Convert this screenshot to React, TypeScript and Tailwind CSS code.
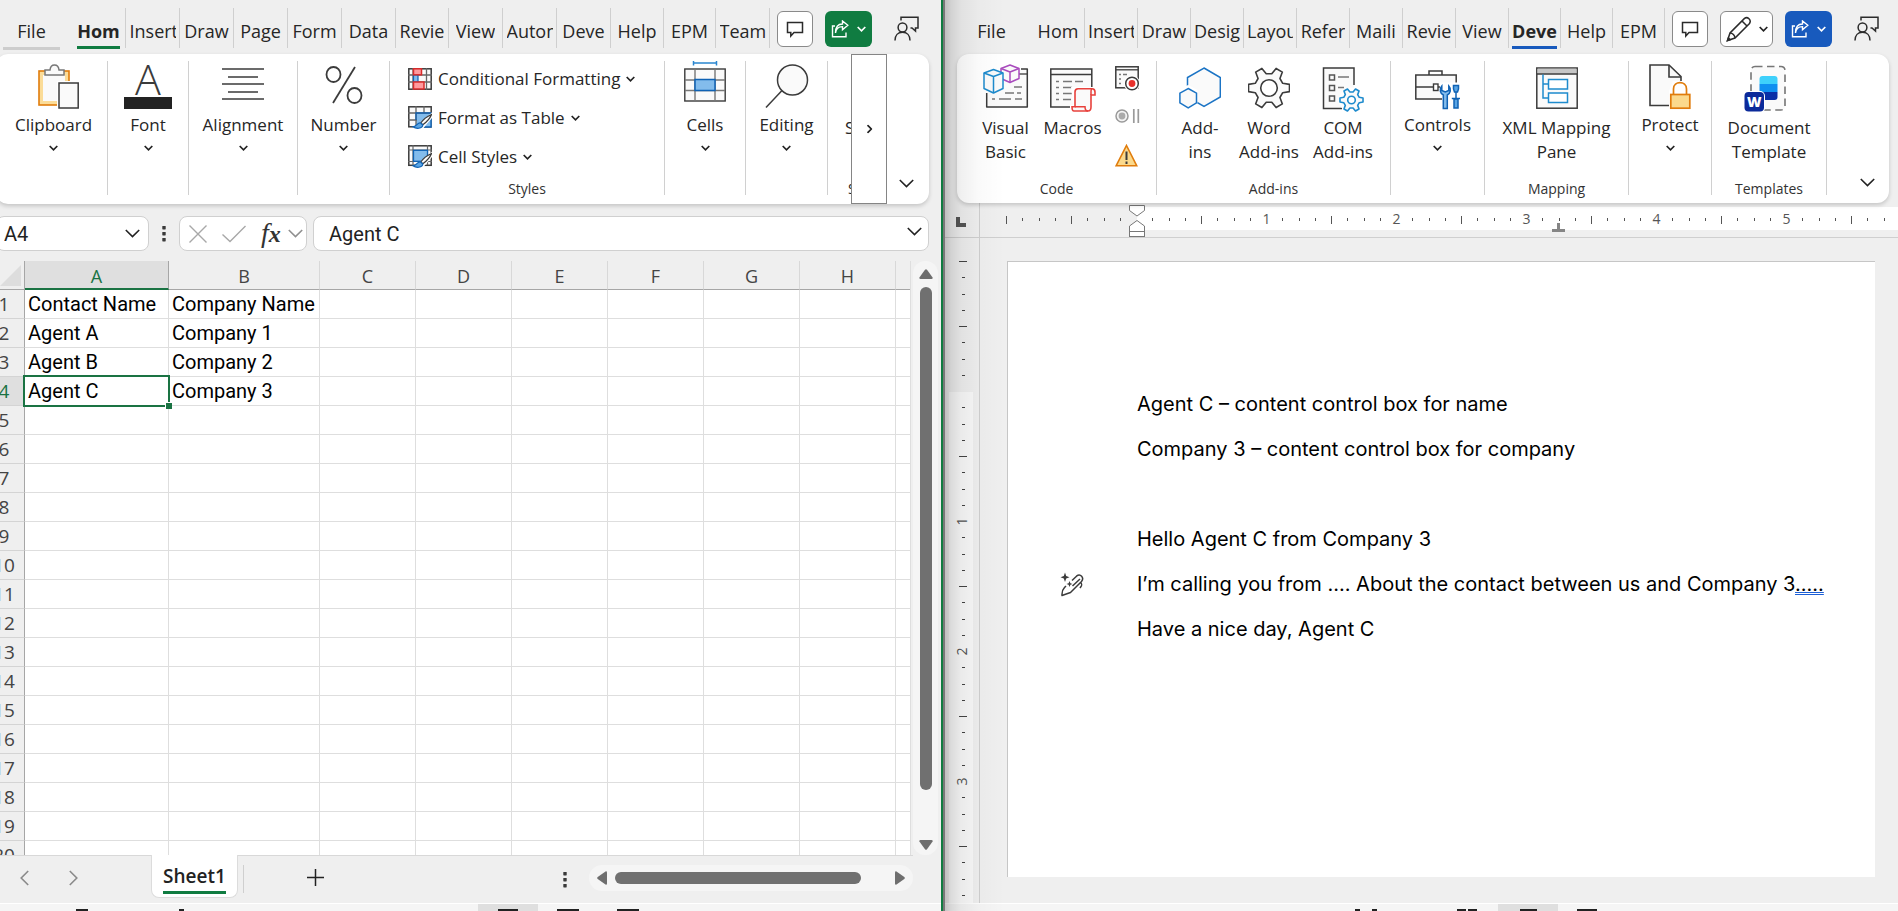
import React from "react";

const INK = "#3b3b3b";

/* ---------- small glyph icons ---------- */

function ChevronSmall({ className = "text-[#222]" }: { className?: string }) {
  return (
    <svg width="9" height="6" viewBox="0 0 9 6" className={className} fill="none" stroke="currentColor" strokeWidth="1.7" aria-hidden="true">
      <path d="M0.7 1 L4.5 4.8 L8.3 1" />
    </svg>
  );
}

function ChevronWide({ className = "text-[#222]" }: { className?: string }) {
  return (
    <svg width="15" height="9" viewBox="0 0 15 9" className={className} fill="none" stroke="currentColor" strokeWidth="1.6" aria-hidden="true">
      <path d="M0.8 1 L7.5 7.6 L14.2 1" />
    </svg>
  );
}

function Dots() {
  return (
    <svg width="4" height="16" viewBox="0 0 4 16" fill="#3a3a3a" aria-hidden="true">
      <rect width="3.4" height="3.4" x="0.3" y="0" rx="0.6" />
      <rect width="3.4" height="3.4" x="0.3" y="6" rx="0.6" />
      <rect width="3.4" height="3.4" x="0.3" y="12" rx="0.6" />
    </svg>
  );
}

function CommentIcon() {
  return (
    <svg width="18" height="18" viewBox="0 0 18 18" fill="none" stroke="#2b2b2b" strokeWidth="1.5" aria-hidden="true">
      <path d="M1.5 2.5 H16.5 V12.5 H8 L4.8 16 V12.5 H1.5 Z" />
    </svg>
  );
}

function ShareIcon() {
  return (
    <svg width="18" height="18" viewBox="0 0 18 18" fill="none" stroke="#fff" strokeWidth="1.4" aria-hidden="true">
      <path d="M4 6 H1.5 V16.8 H15 V12.5" />
      <path d="M4.5 13 C5 8.5 7.5 6.6 11.5 6.6 V9.8 L16.8 5.2 L11.5 1 V4 C6.5 4 4.5 7.5 4.5 13 Z" />
    </svg>
  );
}

function PenIcon() {
  return (
    <svg width="26" height="26" viewBox="0 0 26 26" fill="none" stroke="#2b2b2b" strokeWidth="1.5" aria-hidden="true">
      <path d="M1.5 24.5 L4 17 L18.5 2.4 C21.5 0.2 25.8 4 23.5 7.5 L9 22 Z" />
      <path d="M16 5 L21 10 M4 17 C6.5 17 9 19.5 9 22" />
      <path d="M1.5 24.5 L2.4 21.8 L4.2 23.6 Z" fill="#2b2b2b" />
    </svg>
  );
}

function PersonFeedbackIcon() {
  return (
    <svg width="25" height="25" viewBox="0 0 25 25" fill="none" stroke="#2b2b2b" strokeWidth="1.5" aria-hidden="true">
      <path d="M7 4.5 V1.2 H24 V12 H21.5 V15 L18 12 H16.5" />
      <circle cx="8.5" cy="11.5" r="4.4" />
      <path d="M1 24.5 C1 19.5 4 16.3 8.5 16.3 S16 19.5 16 24.5" />
    </svg>
  );
}

/* ---------- spreadsheet ribbon icons ---------- */

function ClipboardIcon() {
  return (
    <svg width="50" height="46" viewBox="0 0 50 46" aria-hidden="true">
      <rect x="10" y="7" width="30" height="34" fill="#fbdc98" stroke="#e07c0c" strokeWidth="1.6" />
      <rect x="14" y="11" width="22" height="26" fill="#fafafa" />
      <path d="M16 11 V6 H21 C21.3 2.6 23 1 25.5 1 S29.7 2.6 30 6 H35 V11 Z" fill="#fafafa" stroke="#777" strokeWidth="1.5" />
      <rect x="28" y="17" width="22" height="29" fill="#fff" />
      <rect x="30" y="19" width="19.2" height="25" fill="#fafafa" stroke={INK} strokeWidth="1.5" />
    </svg>
  );
}

function FontIcon() {
  return (
    <svg width="48" height="46" viewBox="0 0 48 46" aria-hidden="true">
      <text x="24" y="31" textAnchor="middle" fontSize="43" fill={INK} className="font-['Open_Sans',sans-serif] font-light">
        A
      </text>
      <rect x="0" y="33" width="48" height="12" fill="#222" />
    </svg>
  );
}

function AlignmentIcon() {
  return (
    <svg width="42" height="46" viewBox="0 0 42 46" stroke={INK} strokeWidth="1.4" aria-hidden="true">
      <path d="M0 5 H42 M6 13 H36 M0 20 H42 M6 28 H36 M0 35 H42" />
    </svg>
  );
}

function PercentIcon() {
  return (
    <svg width="38" height="46" viewBox="0 0 38 46" fill="none" stroke={INK} strokeWidth="1.8" aria-hidden="true">
      <ellipse cx="8.5" cy="10.5" rx="7" ry="7.5" />
      <ellipse cx="29.5" cy="31.5" rx="7" ry="7.5" />
      <path d="M30 3 L8 39" />
    </svg>
  );
}

function CellsIcon() {
  return (
    <svg width="42" height="46" viewBox="0 0 42 46" overflow="visible" fill="none" aria-hidden="true">
      <path d="M9.5 -1 H32.5 M9.5 -3 V1.5 M32.5 -3 V1.5" stroke="#2a86d0" strokeWidth="1.5" />
      <rect x="0.8" y="5" width="40.4" height="32" fill="#fafafa" stroke={INK} strokeWidth="1.4" />
      <path d="M1 16 H41 M1 26.5 H41 M11 5 V37 M31 5 V37" stroke="#777" strokeWidth="1.4" />
      <rect x="11" y="15.5" width="20" height="11" fill="#83bcec" stroke="#0f62b4" strokeWidth="1.5" />
    </svg>
  );
}

function MagnifierIcon() {
  return (
    <svg width="44" height="46" viewBox="0 0 44 46" fill="none" stroke={INK} strokeWidth="1.5" aria-hidden="true">
      <circle cx="27.5" cy="16" r="15" fill="#fafafa" />
      <path d="M17 26.5 L1 43.5" />
    </svg>
  );
}

function ConditionalIcon() {
  return (
    <svg width="24" height="22" viewBox="0 0 24 22" fill="none" aria-hidden="true">
      <rect x="0.8" y="0.8" width="22.4" height="20.4" fill="#fafafa" stroke={INK} strokeWidth="1.5" />
      <path d="M0 7 H24 M0 14 H24 M5 0 V22 M18.5 0 V22" stroke="#666" strokeWidth="1.3" />
      <rect x="5.5" y="7" width="4.5" height="7" fill="#83bcec" stroke="#0f62b4" strokeWidth="1.2" />
      <rect x="5.5" y="0.8" width="8" height="6" fill="#ff9a9e" stroke="#d92b2b" strokeWidth="1.5" />
      <rect x="5.5" y="14" width="10.5" height="7" fill="#ff9a9e" stroke="#d92b2b" strokeWidth="1.5" />
    </svg>
  );
}

function BrushOverlay() {
  return (
    <g>
      <path d="M24 6.5 L11 18 L4 22.5 H15 L24 12 Z" fill="#fff" />
      <path d="M23.5 8.5 C19 10.5 14.5 14.5 12.8 17 L14.8 18.8 C18 16.5 22 12.5 23.5 8.5 Z" fill="#fafafa" stroke={INK} strokeWidth="1.3" />
      <path d="M12.3 16.8 C9 16.5 9.5 20.5 5 20.8 C8 23 14.5 23 14.8 19 Z" fill="#5aa5e4" stroke="#0f62b4" strokeWidth="1.2" />
    </g>
  );
}

function FormatTableIcon() {
  return (
    <svg width="24" height="23" viewBox="0 0 24 23" fill="none" aria-hidden="true">
      <rect x="0.8" y="0.8" width="22.4" height="20" fill="#fafafa" stroke={INK} strokeWidth="1.5" />
      <rect x="8" y="7" width="15.5" height="14" fill="#83bcec" />
      <path d="M0 7 H24 M0 14 H9 M8 0 V20 M16 0 V7" stroke="#666" strokeWidth="1.3" />
      <path d="M8 14 V7 H23 V21 H16" stroke="#0f62b4" strokeWidth="1.3" />
      <BrushOverlay />
    </svg>
  );
}

function CellStylesIcon() {
  return (
    <svg width="24" height="23" viewBox="0 0 24 23" fill="none" aria-hidden="true">
      <rect x="0.8" y="0.8" width="22.4" height="19.5" fill="#fafafa" stroke={INK} strokeWidth="1.5" />
      <path d="M0 5 H24 M0 16.5 H24 M5 0 V20 M19.5 0 V20" stroke="#666" strokeWidth="1.2" />
      <rect x="5.5" y="5.3" width="14" height="11" fill="#83bcec" stroke="#0f62b4" strokeWidth="1.3" />
      <BrushOverlay />
    </svg>
  );
}

/* ---------- document ribbon icons ---------- */

function gearPath(cx: number, cy: number, outer: number, inner: number) {
  const pts: string[] = [];
  for (let k = 0; k < 6; k++) {
    const mid = k * 60;
    for (const [off, r] of [
      [-19, inner],
      [-10, outer],
      [10, outer],
      [19, inner],
    ]) {
      const a = ((mid + off) * Math.PI) / 180;
      pts.push(`${(cx + r * Math.cos(a)).toFixed(2)} ${(cy + r * Math.sin(a)).toFixed(2)}`);
    }
  }
  return `M${pts.join(" L")} Z`;
}

function VisualBasicIcon() {
  return (
    <svg width="46" height="46" viewBox="0 0 46 46" fill="none" strokeLinejoin="round" aria-hidden="true">
      <path d="M38 5 H44.3 V43 H3.7 V29" stroke={INK} strokeWidth="1.5" fill="#fafafa" />
      <path d="M36 10 H44" stroke={INK} strokeWidth="1.3" />
      <path d="M31 23 H39 M22 29 H31 M34 29 H38 M9 35 H12 M16 35 H28 M32 35 H39" stroke="#777" strokeWidth="1.5" />
      <path d="M27 1 L36 4.5 V14.5 L27 18.5 L18 14.5 V4.5 Z" fill="#fafafa" stroke="#a94bbd" strokeWidth="1.5" />
      <path d="M18 4.5 L27 8 L36 4.5 M27 8 V18" stroke="#a94bbd" strokeWidth="1.5" />
      <path d="M10.5 5.500 L20 9 V24.5 L10.5 29 L1 24.5 V9 Z" fill="#fafafa" stroke="#1e8bcd" strokeWidth="1.5" />
      <path d="M1 9 L10.5 12.5 L20 9 M10.5 12.5 V29" stroke="#1e8bcd" strokeWidth="1.5" />
    </svg>
  );
}

function MacrosIcon() {
  return (
    <svg width="46" height="48" viewBox="0 0 46 48" fill="none" aria-hidden="true">
      <rect x="0.8" y="5" width="41" height="38" fill="#fafafa" stroke={INK} strokeWidth="1.5" />
      <path d="M1 10.5 H42" stroke={INK} strokeWidth="1.3" />
      <path d="M6 17.5 H9 M13 17.5 H22 M25 17.5 H33 M6 23.5 H9 M13 23.5 H22 M6 29.5 H9 M13 29.5 H22 M6 35.5 H9 M13 35.5 H21" stroke="#777" strokeWidth="1.4" />
      <path d="M21 23 H46 V33 H43 V48 H20 V41 H23 Z" fill="#fff" />
      <path d="M28 24.7 H42 C44 24.7 45 26 45 28 V31 H41 V43 C41 45.5 40 47 38 47 H24 C22.5 47 22 45.5 22 42.7 H25 V28 C25 26 26 24.7 28 24.7 Z" fill="#fafafa" stroke="#e8413c" strokeWidth="1.6" />
      <path d="M25 42.7 H35 C35 45.5 36 47 38 47 M41 31 V28 C41 26 41.5 24.7 42 24.7" stroke="#e8413c" strokeWidth="1.5" />
    </svg>
  );
}

function RecordMacroIcon() {
  return (
    <svg width="25" height="25" viewBox="0 0 25 25" fill="none" aria-hidden="true">
      <rect x="0.8" y="0.8" width="22.4" height="21" fill="#fafafa" stroke={INK} strokeWidth="1.5" />
      <path d="M1 3.8 H23" stroke={INK} strokeWidth="1.3" />
      <path d="M4 8.5 H6 M8 8.5 H12 M4 13 H6 M4 17.5 H6" stroke="#777" strokeWidth="1.3" />
      <circle cx="17" cy="17.5" r="8" fill="#fff" />
      <circle cx="17" cy="17.5" r="6.3" fill="#fff" stroke={INK} strokeWidth="1.5" />
      <circle cx="17" cy="17.5" r="3.4" fill="#e8312c" />
    </svg>
  );
}

function PauseRecordIcon() {
  return (
    <svg width="25" height="14" viewBox="0 0 25 14" fill="none" aria-hidden="true">
      <circle cx="7" cy="7" r="6" stroke="#9a9a9a" strokeWidth="1.5" fill="#f4f4f4" />
      <circle cx="7" cy="7" r="3.4" fill="#ababab" />
      <path d="M18.8 0 V14 M23.3 0 V14" stroke="#9a9a9a" strokeWidth="1.7" />
    </svg>
  );
}

function WarningIcon() {
  return (
    <svg width="24" height="23" viewBox="0 0 24 23" fill="none" aria-hidden="true">
      <path d="M11.5 1.5 L21.7 21.7 H1.2 Z" fill="#fbd98c" stroke="#e07c0c" strokeWidth="1.6" />
      <path d="M11.5 7.5 V16 M11.5 17.5 V20" stroke={INK} strokeWidth="2" />
    </svg>
  );
}

function AddInsIcon() {
  return (
    <svg width="42" height="46" viewBox="0 0 42 46" fill="#fafafa" stroke="#1b74c5" strokeWidth="1.5" aria-hidden="true">
      <path d="M25 4 L41.3 13.5 V33 L25 42.5 L8.500 33 V13.5 Z" />
      <path d="M9.2 21 L18.5 26 V39 L14 44 H0 V25 Z" fill="#fff" stroke="none" />
      <path d="M9.2 24.5 L17.5 29.2 V38.8 L9.2 43.8 L0.9 38.8 V29.2 Z" />
    </svg>
  );
}

function GearIcon() {
  return (
    <svg width="42" height="46" viewBox="0 0 42 46" fill="#fafafa" stroke={INK} strokeWidth="1.6" strokeLinejoin="round" aria-hidden="true">
      <path d={gearPath(21, 24, 20.8, 14.5)} />
      <circle cx="21" cy="24" r="8.3" fill="#fff" />
    </svg>
  );
}

function ComAddInsIcon() {
  return (
    <svg width="42" height="48" viewBox="0 0 42 48" fill="none" aria-hidden="true">
      <path d="M1.5 4 H32 V23 L19 44 H1.5 Z" fill="#fafafa" />
      <path d="M20 44.5 H1.5 V4 H32 V21" stroke={INK} strokeWidth="1.5" />
      <path d="M7.5 11 h5 v5 h-5 z M7.5 21.5 h5 v5 h-5 z M7.5 32 h5 v5 h-5 z" stroke="#555" strokeWidth="1.5" />
      <path d="M16 13 H27 M16 23.5 H22" stroke="#777" strokeWidth="1.4" />
      <circle cx="29.5" cy="36" r="12.5" fill="#fff" />
      <path d={gearPath(29.5, 36, 11.7, 8.2)} fill="#fafafa" stroke="#1e8bcd" strokeWidth="1.6" strokeLinejoin="round" />
      <circle cx="29.5" cy="36" r="3.8" fill="#fff" stroke="#1e8bcd" strokeWidth="1.6" />
    </svg>
  );
}

function ControlsIcon() {
  return (
    <svg width="46" height="46" viewBox="0 0 46 46" fill="none" aria-hidden="true">
      <path d="M14 11 V7 H27 V11" stroke={INK} strokeWidth="1.5" />
      <path d="M0.8 11 H41.2 V35 H0.8 Z" fill="#fafafa" stroke={INK} strokeWidth="1.5" />
      <path d="M1 23 H18 M23 23 H28" stroke={INK} strokeWidth="1.4" />
      <rect x="18.5" y="20" width="4.5" height="6.5" fill="#fff" stroke={INK} strokeWidth="1.4" />
      <path d="M25 18.5 H46 V46 H27 V33 H25 Z" fill="#fff" />
      <path d="M26.800 22 C24 25 25.2 29.500 28.3 31 V44.500 H32.3 V31 C35.400 29.500 36.600 25 33.800 22 V26.500 L30.300 28 L26.800 26.500 Z" fill="#83bcec" stroke="#0f62b4" strokeWidth="1.5" />
      <path d="M38.5 21.5 H43.5 V25 L42.5 28 H39.5 L38.500 25 Z M41 28 V34 M36.8 34.5 H45 M39 35 H43 V44 H39 Z" fill="#5aa5e4" stroke="#0f62b4" strokeWidth="1.5" />
    </svg>
  );
}

function XmlMappingIcon() {
  return (
    <svg width="42" height="46" viewBox="0 0 42 46" fill="none" aria-hidden="true">
      <rect x="0.8" y="4" width="40.4" height="40.2" fill="#fafafa" stroke={INK} strokeWidth="1.5" />
      <rect x="1.5" y="4.7" width="39" height="5" fill="#c6c6c6" />
      <path d="M1 10 H41" stroke={INK} strokeWidth="1.3" />
      <path d="M7 10.5 V34 H12.5 M7 20 H12.5" stroke="#1e8bcd" strokeWidth="1.5" />
      <rect x="12.5" y="15.5" width="19" height="9.5" fill="#fff" stroke="#1e8bcd" strokeWidth="1.5" />
      <rect x="12.5" y="29" width="19" height="9.5" fill="#fff" stroke="#1e8bcd" strokeWidth="1.5" />
    </svg>
  );
}

function ProtectIcon() {
  return (
    <svg width="42" height="46" viewBox="0 0 42 46" fill="none" aria-hidden="true">
      <path d="M1 1 H20 L32 12.5 V42 H1 Z" fill="#fafafa" />
      <path d="M20 41.5 H1 V1 H20 L32 12.5 V17" stroke={INK} strokeWidth="1.6" />
      <path d="M20 1 V13 H32" stroke={INK} strokeWidth="1.6" />
      <path d="M20 27 L24 17 H38 L42 27 V46 H20 Z" fill="#fff" />
      <path d="M24.5 31 V25 C24.5 16.5 37.5 16.5 37.5 25 V31" stroke="#e07c0c" strokeWidth="1.7" />
      <rect x="21.8" y="30.5" width="19" height="13.7" fill="#fbd98c" stroke="#e07c0c" strokeWidth="1.7" />
    </svg>
  );
}

function TemplateIcon() {
  return (
    <svg width="50" height="48" viewBox="0 0 50 48" overflow="visible" fill="none" aria-hidden="true">
      <rect x="7" y="2.5" width="34" height="43.5" rx="4" fill="#fafafa" stroke="#767676" strokeWidth="1.6" strokeDasharray="7.5 4.5" />
      <path d="M15.5 15 C15.5 13 16.5 12 18.5 12 H30.5 C32.5 12 33.5 13 33.5 15 V20 H15.5 Z" fill="#3ed0fb" />
      <path d="M15.5 20 H33.5 V28 H15.5 Z" fill="#0f8ff0" />
      <path d="M15.5 28 H33.5 V33 C33.5 35 32.5 36 30.5 36 H15.5 Z" fill="#0a2fa6" />
      <rect x="-1" y="27" width="22" height="22" rx="5" fill="#fff" />
      <rect x="0.5" y="28" width="19.5" height="19.5" rx="4" fill="#0b2a9a" />
      <text x="10.2" y="43" textAnchor="middle" fontSize="14" fill="#fff" className="font-['Open_Sans',sans-serif] font-extrabold">
        W
      </text>
    </svg>
  );
}

function RewriteIcon() {
  return (
    <svg width="24" height="25" viewBox="0 0 24 25" fill="none" stroke={INK} strokeWidth="1.5" strokeLinejoin="round" aria-hidden="true">
      <path d="M12 8.5 L16.5 4.2 C20.5 1 24.5 6 21.5 9.5 L10.5 20.5 L2 23.5 C1.8 20.500 2.5 17.5 4.5 15.5 L6 14" />
      <path d="M20 7 L12.5 14 M20.5 10.5 C23 12.5 21.5 14 20 16" />
      <path d="M5 0.5 L6.2 4 L9.5 5.2 L6.2 6.4 L5 10 L3.8 6.4 L0.5 5.2 L3.8 4 Z M9.5 9 L10.4 11.2 L12.5 12 L10.4 12.8 L9.5 15 L8.6 12.8 L6.5 12 L8.6 11.2 Z" fill={INK} stroke="none" />
    </svg>
  );
}

/* ---------- shared chrome ---------- */

type Tab = { label: string; width: string };

function TabStrip({ tabs, active, accent, file }: { tabs: Tab[]; active: string; accent: string; file: string }) {
  return (
    <nav className="flex min-w-0 flex-1 overflow-hidden pt-2 text-[18px] text-[#262626]">
      <button type="button" className={`mr-3 h-[42px] w-[57px] shrink-0 leading-[47px] ${file}`}>
        File
      </button>
      {tabs.map((t) => (
        <button key={t.label} type="button" className={`flex h-10 shrink-0 items-start justify-center border-r border-[#cfcfcf] ${t.width}`}>
          <span
            className={`h-[41px] max-w-[46px] overflow-hidden border-b-[3px] leading-[47px] whitespace-nowrap ${
              t.label === active ? `font-bold ${accent}` : "border-transparent"
            }`}
          >
            {t.label}
          </span>
        </button>
      ))}
    </nav>
  );
}

function Group({ width, caption, children }: { width: string; caption?: string; children: React.ReactNode }) {
  return (
    <div className={`mt-[7px] flex h-[134px] shrink-0 flex-col border-r border-[#d0d0d0] ${width}`}>
      {children}
      {caption && <div className="mt-auto text-center text-[14px] leading-3 text-[#333]">{caption}</div>}
    </div>
  );
}

function DropButton({ icon, label }: { icon: React.ReactNode; label: string }) {
  return (
    <button type="button" className="flex flex-col items-center pt-[3px] text-[17px] text-[#262626]">
      <span className="flex h-[46px] items-start">{icon}</span>
      <span className="mt-[3px] leading-6">{label}</span>
      <span className="mt-2">
        <ChevronSmall />
      </span>
    </button>
  );
}

function BigButton({ icon, lines, width }: { icon: React.ReactNode; lines: string[]; width: string }) {
  return (
    <button type="button" className={`flex shrink-0 flex-col items-center pt-[3px] text-[17px] leading-6 text-[#262626] ${width}`}>
      <span className="flex h-[46px] items-start">{icon}</span>
      <span className="mt-[6px] flex flex-col whitespace-nowrap">
        {lines.map((l) => (
          <span key={l}>{l}</span>
        ))}
      </span>
    </button>
  );
}

function RowButton({ icon, label }: { icon: React.ReactNode; label: string }) {
  return (
    <button type="button" className="flex h-[39px] items-center gap-[6px] text-[17px] text-[#262626]">
      {icon}
      <span>{label}</span>
      <ChevronSmall />
    </button>
  );
}

/* ---------- spreadsheet window ---------- */

const EXCEL_TABS: Tab[] = [
  { label: "Hom", width: "w-[54px]" },
  { label: "Insert", width: "w-[54px]" },
  { label: "Draw", width: "w-[54px]" },
  { label: "Page", width: "w-[54px]" },
  { label: "Form", width: "w-[54px]" },
  { label: "Data", width: "w-[54px]" },
  { label: "Revie", width: "w-[53px]" },
  { label: "View", width: "w-[54px]" },
  { label: "Autom", width: "w-[54px]" },
  { label: "Deve", width: "w-[54px]" },
  { label: "Help", width: "w-[53px]" },
  { label: "EPM", width: "w-[52px]" },
  { label: "Team", width: "w-[54px]" },
];

const COLUMNS = ["A", "B", "C", "D", "E", "F", "G", "H"];
const DATA: Record<number, [string, string]> = {
  1: ["Contact Name", "Company Name"],
  2: ["Agent A", "Company 1"],
  3: ["Agent B", "Company 2"],
  4: ["Agent C", "Company 3"],
};

function Sheet() {
  const rows = Array.from({ length: 20 }, (_, i) => i + 1);
  return (
    <table className="w-full table-fixed border-separate border-spacing-0 text-left">
      <colgroup>
        <col className="w-[25px]" />
        <col className="w-[144px]" />
        <col className="w-[151px]" />
        {COLUMNS.slice(2).map((c) => (
          <col key={c} className="w-24" />
        ))}
        <col />
      </colgroup>
      <thead>
        <tr className="h-[29px] bg-[#efefef] text-[18px] text-[#444]">
          <th className="border-r border-b border-[#a6a6a6] p-0" aria-label="Select all">
            <svg width="21" height="21" viewBox="0 0 21 21" aria-hidden="true">
              <path d="M21 0 V21 H0 Z" fill="#dddddd" />
            </svg>
          </th>
          {COLUMNS.map((c) => (
            <th
              key={c}
              scope="col"
              className={`h-[29px] p-0 pt-[3px] text-center align-top leading-6 font-normal ${
                c === "A" ? "border-r border-b-2 border-r-[#a6a6a6] border-b-[#1a7343] bg-[#dfdfdf] text-[#1a7343]" : "border-r border-b border-r-[#d8d8d8] border-b-[#a6a6a6]"
              }`}
            >
              {c}
            </th>
          ))}
          <th className="border-b border-[#a6a6a6] p-0" aria-label="I" />
        </tr>
      </thead>
      <tbody>
        {rows.map((r) => (
          <tr key={r} className="h-[29px]">
            <th
              scope="row"
              className={`h-[29px] overflow-hidden border-r border-b border-r-[#a6a6a6] border-b-[#d4d4d4] p-0 text-[19px] leading-7 font-normal ${
                r === 4 ? "bg-[#dfdfdf] text-[#1a7343]" : "bg-[#efefef] text-[#444]"
              }`}
            >
              <span className="-ml-4 block text-center">{r}</span>
            </th>
            {COLUMNS.map((c, ci) => (
              <td
                key={c}
                className="relative border-r border-b border-[#dedede] bg-white p-0 pl-[3px] font-['Roboto',sans-serif] text-[20px] leading-7 whitespace-nowrap text-black"
              >
                {DATA[r]?.[ci] ?? ""}
                {r === 4 && c === "A" && (
                  <span className="absolute -top-0.5 -right-0.5 -bottom-0.5 -left-0.5 z-10 border-2 border-[#1a7343]">
                    <span className="absolute -right-1 -bottom-1 h-[7px] w-[7px] border-t border-l border-white bg-[#1a7343]" />
                  </span>
                )}
              </td>
            ))}
            <td className="border-b border-[#dedede] bg-white p-0" />
          </tr>
        ))}
      </tbody>
    </table>
  );
}

function ExcelWindow() {
  return (
    <section className="flex min-w-0 overflow-hidden bg-[#efefef]" aria-label="Spreadsheet">
      <div className="flex min-w-0 flex-1 flex-col">
        <header className="flex h-[54px] shrink-0">
          <TabStrip tabs={EXCEL_TABS} active="Hom" accent="border-[#107c41]" file="ml-[3px] border-b-[3px] border-[#cdcdcd]" />
          <div className="flex shrink-0 items-start gap-3 pt-[11px] pr-[22px]">
            <button type="button" aria-label="Comments" className="flex h-9 w-9 items-center justify-center rounded-md border border-[#8a8a8a] bg-white">
              <CommentIcon />
            </button>
            <button type="button" aria-label="Share" className="flex h-9 w-[47px] items-center justify-center gap-2 rounded-md bg-[#107c41] text-white">
              <ShareIcon />
              <ChevronSmall className="text-white" />
            </button>
            <button type="button" aria-label="Presence" className="ml-[10px] pt-[5px]">
              <PersonFeedbackIcon />
            </button>
          </div>
        </header>

        <div className="mr-3 -ml-1 flex h-[150px] shrink-0 rounded-xl bg-white pl-1 shadow-[0_2px_4px_rgba(0,0,0,0.18)]">
          <div className="flex min-w-0 flex-1 overflow-hidden">
            <Group width="w-[108px]">
              <DropButton icon={<ClipboardIcon />} label="Clipboard" />
            </Group>
            <Group width="w-[81px]">
              <DropButton icon={<FontIcon />} label="Font" />
            </Group>
            <Group width="w-[109px]">
              <DropButton icon={<AlignmentIcon />} label="Alignment" />
            </Group>
            <Group width="w-[92px]">
              <DropButton icon={<PercentIcon />} label="Number" />
            </Group>
            <Group width="w-[275px]" caption="Styles">
              <div className="-mt-0.5 flex flex-col items-start pl-[18px]">
                <RowButton icon={<ConditionalIcon />} label="Conditional Formatting" />
                <RowButton icon={<FormatTableIcon />} label="Format as Table" />
                <RowButton icon={<CellStylesIcon />} label="Cell Styles" />
              </div>
            </Group>
            <Group width="w-[81px]">
              <DropButton icon={<CellsIcon />} label="Cells" />
            </Group>
            <Group width="w-[82px]">
              <DropButton icon={<MagnifierIcon />} label="Editing" />
            </Group>
            <Group width="w-[110px]">
              <div className="flex h-full flex-col justify-between pt-[55px] pl-[17px] text-[#262626]">
                <span className="text-[17px] leading-6">Sensitivity</span>
                <span className="pl-[3px] text-[14px] leading-3">Sensitivity</span>
              </div>
            </Group>
          </div>
          <button type="button" aria-label="Scroll ribbon right" className="flex w-9 shrink-0 items-center justify-center border border-[#858585] bg-white">
            <span className="-rotate-90">
              <ChevronSmall />
            </span>
          </button>
          <div className="flex w-[42px] shrink-0 items-end pb-4 pl-3">
            <button type="button" aria-label="Collapse ribbon">
              <ChevronWide />
            </button>
          </div>
        </div>

        <div className="mt-3 mr-3 flex h-[35px] shrink-0 font-['Roboto',sans-serif] text-[20px] text-[#222]">
          <div className="-ml-1 flex w-[153px] items-center rounded-lg border border-[#d0d0d0] bg-white pr-2 pl-[7px]">
            <input aria-label="Name box" defaultValue="A4" className="min-w-0 flex-1 outline-none" />
            <button type="button" aria-label="Name list">
              <ChevronWide />
            </button>
          </div>
          <div className="flex w-[30px] items-center justify-center">
            <Dots />
          </div>
          <div className="flex w-32 items-center rounded-lg border border-[#d0d0d0] bg-white pl-[9px] text-[#a8a8a8]">
            <button type="button" aria-label="Cancel">
              <svg width="18" height="18" viewBox="0 0 18 18" fill="none" stroke="currentColor" strokeWidth="1.4" aria-hidden="true">
                <path d="M0.5 0.5 L17.5 17.5 M17.5 0.5 L0.5 17.5" />
              </svg>
            </button>
            <button type="button" aria-label="Enter" className="ml-[15px]">
              <svg width="24" height="18" viewBox="0 0 24 18" fill="none" stroke="currentColor" strokeWidth="1.4" aria-hidden="true">
                <path d="M0.5 9.5 L8 16.5 L23.5 1" />
              </svg>
            </button>
            <button type="button" aria-label="Insert function" className="ml-[15px] flex items-baseline font-['Liberation_Serif',serif] text-[#333] italic">
              <span className="text-[28px] leading-8">f</span>
              <span className="text-[24px] leading-8 font-bold">x</span>
            </button>
            <span className="ml-[7px]">
              <ChevronWide className="text-[#909090]" />
            </span>
          </div>
          <div className="ml-[6px] flex min-w-0 flex-1 items-center rounded-lg border border-[#d0d0d0] bg-white pr-[6px] pl-[15px]">
            <input aria-label="Formula bar" defaultValue="Agent C" className="min-w-0 flex-1 outline-none" />
            <button type="button" aria-label="Expand formula bar" className="pb-1">
              <ChevronWide />
            </button>
          </div>
        </div>

        <div className="mt-[10px] flex min-h-0 flex-1">
          <div className="min-w-0 flex-1 overflow-hidden border-r border-[#dedede]">
            <Sheet />
          </div>
          <div className="mr-[3px] ml-[2px] flex w-[25px] shrink-0 flex-col items-center rounded-xl bg-[#f5f5f5] pt-2 pb-[5px]">
            <svg width="14" height="10" viewBox="0 0 14 10" fill="#6e6e6e" aria-hidden="true">
              <path d="M6 0.7 Q7 -0.3 8 0.7 L13.6 8.5 Q14 10 12.5 10 H1.5 Q0 10 0.4 8.5 Z" />
            </svg>
            <div className="mt-2 mb-[50px] w-3 flex-1 rounded-full bg-[#707070]" />
            <svg width="14" height="10" viewBox="0 0 14 10" fill="#6e6e6e" aria-hidden="true">
              <path d="M6 9.3 Q7 10.3 8 9.3 L13.6 1.5 Q14 0 12.5 0 H1.5 Q0 0 0.4 1.5 Z" />
            </svg>
          </div>
        </div>

        <footer className="shrink-0">
          <div className="flex h-12 items-start">
            <div className="flex h-full min-w-0 flex-1 items-start border-t border-[#d8d8d8] text-[#8a8a8a]">
              <button type="button" aria-label="Previous sheet" className="mt-[14px] flex w-[49px] justify-center">
                <svg width="9" height="16" viewBox="0 0 9 16" fill="none" stroke="currentColor" strokeWidth="1.6" aria-hidden="true">
                  <path d="M8.2 1 L1.2 8 L8.2 15" />
                </svg>
              </button>
              <button type="button" aria-label="Next sheet" className="mt-[14px] flex w-[49px] justify-center">
                <svg width="9" height="16" viewBox="0 0 9 16" fill="none" stroke="currentColor" strokeWidth="1.6" aria-hidden="true">
                  <path d="M0.8 1 L7.8 8 L0.8 15" />
                </svg>
              </button>
              <button type="button" className="-mt-px ml-[53px] flex h-[43px] w-[87px] justify-center rounded-b-lg border border-t-0 border-[#dcdcdc] bg-white">
                <span className="h-[39px] border-b-[3px] border-[#107c41] text-[19px] leading-[42px] font-semibold text-[#222]">Sheet1</span>
              </button>
              <span className="mt-[9px] ml-[5px] h-7 w-px bg-[#cfcfcf]" />
              <button type="button" aria-label="New sheet" className="mt-[13px] ml-[63px]">
                <svg width="17" height="17" viewBox="0 0 17 17" fill="none" stroke="#222" strokeWidth="1.5" aria-hidden="true">
                  <path d="M8.5 0 V17 M0 8.5 H17" />
                </svg>
              </button>
              <span className="mt-4 ml-auto">
                <Dots />
              </span>
              <div className="mt-[9px] ml-[22px] flex h-[26px] w-[324px] shrink-0 items-center rounded-full bg-[#f5f5f5] px-2">
                <svg width="10" height="14" viewBox="0 0 10 14" fill="#6e6e6e" aria-hidden="true">
                  <path d="M0.7 6 Q-0.3 7 0.7 8 L8.5 13.6 Q10 14 10 12.5 V1.5 Q10 0 8.5 0.4 Z" />
                </svg>
                <div className="mr-[34px] ml-2 h-3 flex-1 rounded-full bg-[#707070]" />
                <svg width="10" height="14" viewBox="0 0 10 14" fill="#6e6e6e" aria-hidden="true">
                  <path d="M9.3 6 Q10.3 7 9.3 8 L1.5 13.6 Q0 14 0 12.5 V1.5 Q0 0 1.5 0.4 Z" />
                </svg>
              </div>
            </div>
            <div className="w-7 shrink-0" />
          </div>
          <div className="flex h-2 overflow-hidden border-t border-white bg-[#f5f5f5]">
            <span className="mt-[5px] ml-[76px] w-3 bg-[#222]" />
            <span className="mt-[5px] ml-[91px] w-[5px] bg-[#222]" />
            <span className="ml-[294px] flex w-[60px] justify-center bg-[#dfdfdf] pt-[5px]">
              <span className="w-5 bg-[#222]" />
            </span>
            <span className="mt-[5px] ml-[19px] w-[22px] bg-[#222]" />
            <span className="mt-[5px] ml-[38px] w-[22px] bg-[#222]" />
          </div>
        </footer>
      </div>
      <div className="w-0.5 shrink-0 bg-[#107c41]" />
      <div className="w-0.5 shrink-0 bg-[#787878]" />
    </section>
  );
}

/* ---------- document window ---------- */

const WORD_TABS: Tab[] = [
  { label: "Hom", width: "w-[53px]" },
  { label: "Insert", width: "w-[53px]" },
  { label: "Draw", width: "w-[53px]" },
  { label: "Design", width: "w-[53px]" },
  { label: "Layout", width: "w-[53px]" },
  { label: "Refer", width: "w-[53px]" },
  { label: "Maili", width: "w-[53px]" },
  { label: "Revie", width: "w-[53px]" },
  { label: "View", width: "w-[53px]" },
  { label: "Deve", width: "w-[52px]" },
  { label: "Help", width: "w-[52px]" },
  { label: "EPM", width: "w-[52px]" },
];

const EIGHTH = 16.25;
const TICKS = Array.from({ length: 130 }, (_, i) => i - 8).filter((i) => i !== 0);

function HorizontalRuler() {
  return (
    <svg className="h-[34px] w-full" fill="none" aria-label="Horizontal ruler">
      <rect x="157" y="4" width="100%" height="23" fill="#fff" />
      {TICKS.map((i) => {
        const x = Math.round(156 + i * EIGHTH) + 0.5;
        if (i > 0 && i % 8 === 0) {
          return (
            <text key={i} x={x} y="21" textAnchor="middle" fontSize="14" fill="#555">
              {i / 8}
            </text>
          );
        }
        return <path key={i} d={i % 4 === 0 ? `M${x} 13 V21` : `M${x} 15 V18`} stroke="#555" />;
      })}
      <path d="M149.5 2.5 H164.5 V7.5 L157 13 L149.5 7.5 Z" fill="#fff" stroke="#777" />
      <path d="M149.5 34 V23 L157 17.5 L164.5 23 V34 M149.5 28.5 H164.5 M149.5 33.5 H164.5" fill="#fff" stroke="#777" />
      <path d="M577 20 H580 V26 H585 V29 H572 V26 H577 Z" fill="#858585" />
    </svg>
  );
}

function VerticalRuler() {
  return (
    <svg className="h-full w-[34px]" fill="none" aria-label="Vertical ruler">
      <rect x="4" y="154" width="24" height="100%" fill="#f9f9f9" />
      {TICKS.map((i) => {
        const y = Math.round(153 + i * EIGHTH) + 0.5;
        if (i > 0 && i % 8 === 0) {
          return (
            <text key={i} x="22" y={y} textAnchor="middle" fontSize="14" fill="#555" transform={`rotate(-90 22 ${y})`}>
              {i / 8}
            </text>
          );
        }
        return <path key={i} d={i % 4 === 0 ? `M14 ${y} H22` : `M17 ${y} H20`} stroke="#444" />;
      })}
    </svg>
  );
}

function WordWindow() {
  return (
    <section className="relative flex min-w-0 flex-col overflow-hidden bg-[#efefef]" aria-label="Document">
      <header className="flex h-[54px] shrink-0">
        <TabStrip tabs={WORD_TABS} active="Deve" accent="border-[#185abd]" file="ml-[18px]" />
        <div className="flex shrink-0 items-start gap-3 pt-[11px] pr-[19px]">
          <button type="button" aria-label="Comments" className="flex h-9 w-9 items-center justify-center rounded-md border border-[#8a8a8a] bg-white">
            <CommentIcon />
          </button>
          <button type="button" aria-label="Editing mode" className="flex h-9 w-[53px] items-center justify-center gap-[7px] rounded-md border border-[#8a8a8a] bg-white">
            <PenIcon />
            <ChevronSmall />
          </button>
          <button type="button" aria-label="Share" className="flex h-9 w-[47px] items-center justify-center gap-2 rounded-md bg-[#185abd] text-white">
            <ShareIcon />
            <ChevronSmall className="text-white" />
          </button>
          <button type="button" aria-label="Presence" className="ml-[10px] pt-[5px]">
            <PersonFeedbackIcon />
          </button>
        </div>
      </header>

      <div className="z-10 mr-[9px] ml-3 flex h-[149px] shrink-0 rounded-xl bg-white shadow-[0_2px_4px_rgba(0,0,0,0.18)]">
        <div className="flex min-w-0 flex-1 overflow-hidden">
          <Group width="w-[200px]" caption="Code">
            <div className="flex pl-[15px]">
              <BigButton width="w-[67px]" icon={<VisualBasicIcon />} lines={["Visual", "Basic"]} />
              <BigButton width="w-[67px]" icon={<MacrosIcon />} lines={["Macros"]} />
              <div className="ml-[9px] flex flex-col pt-[5px]">
                <button type="button" aria-label="Record macro">
                  <RecordMacroIcon />
                </button>
                <button type="button" aria-label="Pause recording" className="mt-[18px]">
                  <PauseRecordIcon />
                </button>
                <button type="button" aria-label="Macro security" className="mt-[21px]">
                  <WarningIcon />
                </button>
              </div>
            </div>
          </Group>
          <Group width="w-[234px]" caption="Add-ins">
            <div className="flex pl-2">
              <BigButton width="w-[70px]" icon={<AddInsIcon />} lines={["Add-", "ins"]} />
              <BigButton width="w-[68px]" icon={<GearIcon />} lines={["Word", "Add-ins"]} />
              <BigButton width="w-[80px]" icon={<ComAddInsIcon />} lines={["COM", "Add-ins"]} />
            </div>
          </Group>
          <Group width="w-[94px]">
            <DropButton icon={<ControlsIcon />} label="Controls" />
          </Group>
          <Group width="w-[144px]" caption="Mapping">
            <BigButton width="w-full" icon={<XmlMappingIcon />} lines={["XML Mapping", "Pane"]} />
          </Group>
          <Group width="w-[83px]">
            <DropButton icon={<ProtectIcon />} label="Protect" />
          </Group>
          <Group width="w-[115px]" caption="Templates">
            <BigButton width="w-full" icon={<TemplateIcon />} lines={["Document", "Template"]} />
          </Group>
        </div>
        <div className="flex shrink-0 items-end pr-[14px] pb-4">
          <button type="button" aria-label="Collapse ribbon">
            <ChevronWide />
          </button>
        </div>
      </div>

      <div className="flex h-[35px] shrink-0 border-b border-[#cfcfcf]">
        <div className="w-[35px] shrink-0 border-r border-[#cfcfcf] pt-[14px] pl-[11px]">
          <svg width="10" height="10" viewBox="0 0 10 10" fill="#555" aria-hidden="true">
            <path d="M0 0 H4 V6 H10 V10 H0 Z" />
          </svg>
        </div>
        <div className="min-w-0 flex-1">
          <HorizontalRuler />
        </div>
      </div>

      <div className="flex min-h-0 flex-1">
        <div className="w-[35px] shrink-0 overflow-hidden border-r border-[#cfcfcf]">
          <VerticalRuler />
        </div>
        <article className="mt-[23px] mr-[23px] mb-[26px] ml-[27px] min-w-0 flex-1 overflow-hidden border-t border-l border-[#c6c6c6] bg-white pt-[120px] pl-[129px] font-['Inter',sans-serif] text-[20px] leading-[45px] whitespace-nowrap text-black">
          <p>Agent C – content control box for name</p>
          <p>Company 3 – content control box for company</p>
          <p className="h-[45px]" />
          <p>Hello Agent C from Company 3</p>
          <p className="relative">
            <button type="button" aria-label="Rewrite" className="absolute top-[10px] -left-[77px]">
              <RewriteIcon />
            </button>
            I’m calling you from .... About the contact between us and Company 3
            <span className="underline decoration-[#1c5fd6] decoration-double decoration-1 underline-offset-1">.....</span>
          </p>
          <p>Have a nice day, Agent C</p>
        </article>
      </div>

      <footer className="flex h-2 shrink-0 overflow-hidden border-t border-white bg-[#f5f5f5]">
        <span className="mt-[5px] ml-[410px] w-[5px] bg-[#222]" />
        <span className="mt-[5px] ml-[12px] w-[5px] bg-[#222]" />
        <span className="mt-[5px] ml-[80px] w-[9px] bg-[#222]" />
        <span className="mt-[5px] ml-[2px] w-[9px] bg-[#222]" />
        <span className="ml-[21px] flex w-[60px] justify-center bg-[#dfdfdf] pt-[5px]">
          <span className="w-[17px] bg-[#222]" />
        </span>
        <span className="mt-[5px] ml-[19px] w-5 bg-[#222]" />
      </footer>

      <div className="pointer-events-none absolute inset-y-0 left-0 z-20 w-[60px] bg-[linear-gradient(to_right,rgba(0,0,0,0.2),rgba(0,0,0,0.12)_6px,rgba(0,0,0,0.06)_16px,rgba(0,0,0,0.02)_34px,transparent)]" />
    </section>
  );
}

export default function App() {
  return (
    <main className="grid h-screen grid-cols-[945fr_953fr] overflow-hidden bg-[#efefef] font-['Open_Sans','Noto_Sans',sans-serif]">
      <ExcelWindow />
      <WordWindow />
    </main>
  );
}
